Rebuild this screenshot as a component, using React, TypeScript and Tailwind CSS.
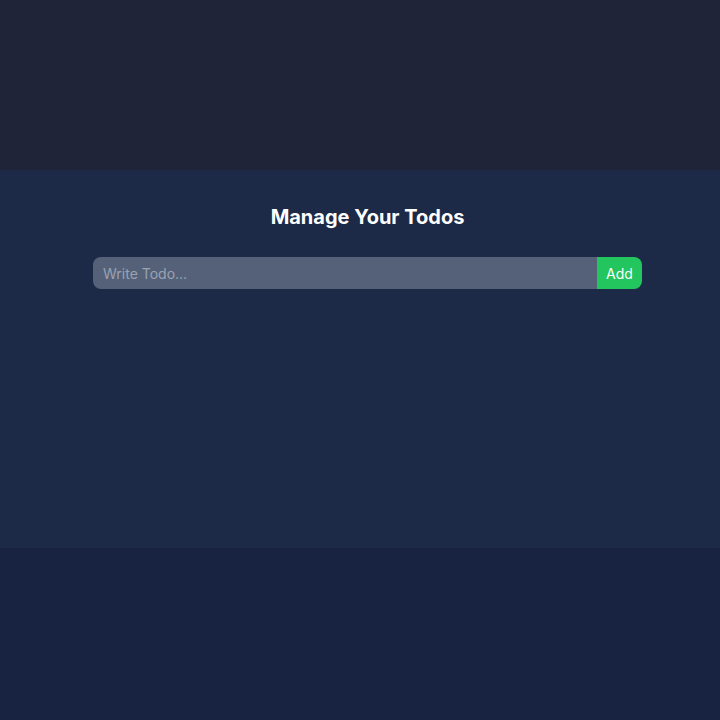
export default function App() {
  return (
    <div className="flex h-[720px] flex-col font-['Inter',sans-serif]">
      <div className="h-[170px] bg-[#1f2438]" />
      <div className="h-[378px] bg-[#1c2a48] pl-[93px] pr-[78px] pt-[33px] text-white">
        <h1 className="mb-[26px] text-center text-[20px] font-bold leading-7">Manage Your Todos</h1>
        <form className="flex" onSubmit={(e) => e.preventDefault()}>
          <input
            type="text"
            placeholder="Write Todo..."
            className="h-8 w-full rounded-l-lg bg-[#546179] px-[10px] text-[14px] text-white outline-none placeholder:text-[#9aa3b2]"
          />
          <button type="submit" className="h-8 w-[45px] shrink-0 rounded-r-lg bg-[#22c55e] text-[14px] text-white">
            Add
          </button>
        </form>
      </div>
      <div className="flex-1 bg-[#172341]" />
    </div>
  );
}
